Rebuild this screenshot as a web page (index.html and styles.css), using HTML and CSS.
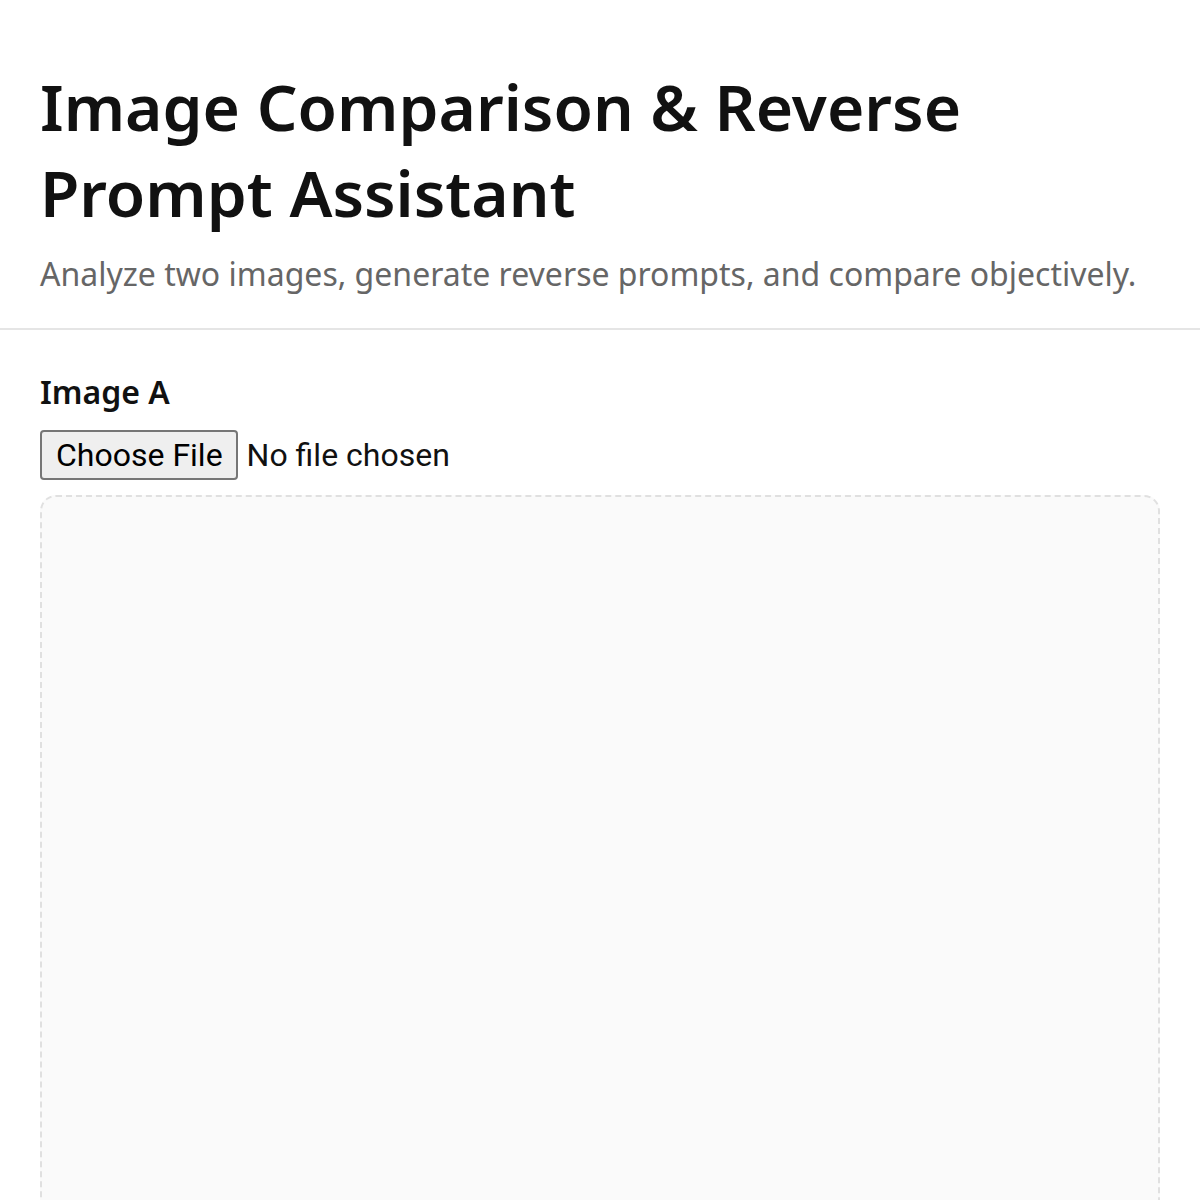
FILE: index.html
```html
<!DOCTYPE html>
<html lang="en">
<head>
<meta charset="utf-8">
<title>Image Comparison &amp; Reverse Prompt Assistant</title>
<link rel="stylesheet" href="styles.css">
</head>
<body>
<header class="site-header">
  <h1 class="title">Image Comparison &amp; Reverse Prompt Assistant</h1>
  <p class="subtitle">Analyze two images, generate reverse prompts, and compare objectively.</p>
</header>
<main class="content">
  <section class="upload">
    <label class="upload-label" for="image-a">Image A</label>
    <input class="file-input" id="image-a" type="file" accept="image/*">
    <div class="preview"></div>
  </section>
</main>
</body>
</html>
```

FILE: styles.css
```css
* {
  box-sizing: border-box;
}

html, body {
  margin: 0;
  padding: 0;
  background: #ffffff;
}

body {
  font-family: "Noto Sans", "DejaVu Sans", sans-serif;
  color: #111111;
}

.site-header {
  padding: 64px 40px 30px;
  border-bottom: 2px solid #e5e5e5;
}

.title {
  margin: 0 0 14px;
  font-size: 64px;
  line-height: 86px;
  font-weight: 600;
  color: #111111;
}

.subtitle {
  margin: 0;
  font-size: 32px;
  line-height: 48px;
  color: #666666;
}

.content {
  padding: 38px 40px 0;
}

.upload {
  display: flex;
  flex-direction: column;
  align-items: flex-start;
}

.upload-label {
  font-size: 32px;
  line-height: 48px;
  font-weight: 600;
  margin-bottom: 14px;
}

.file-input {
  display: block;
  font-family: Roboto, "Liberation Sans", sans-serif;
  font-size: 32px;
  color: #111111;
}

.file-input::file-selector-button {
  font: inherit;
  color: #000000;
  background: #efefef;
  border: 2px solid #767676;
  border-radius: 4px;
  padding: 4px 13px 4px 14px;
  margin-right: 9px;
}

.preview {
  align-self: stretch;
  margin-top: 15px;
  height: 800px;
  background: #fafafa;
  border: 2px dashed #e0e0e0;
  border-radius: 16px;
}
```
